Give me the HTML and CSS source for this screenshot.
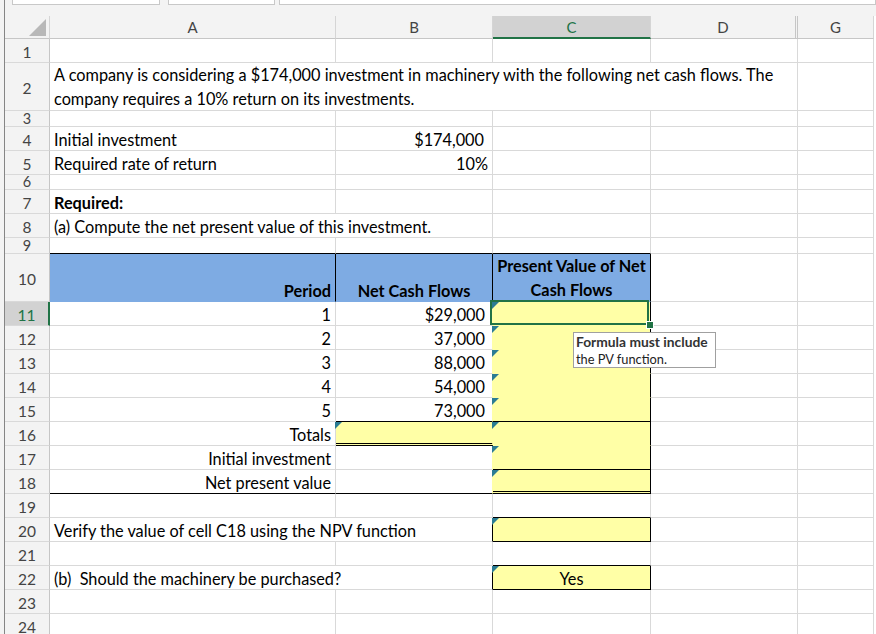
FILE: index.html
```html
<!DOCTYPE html>
<html>
<head>
<meta charset="utf-8">
<link rel="stylesheet" href="styles.css">
</head>
<body>
<div class="app">
  <div class="edge"></div>
  <div class="main">
    <div class="topbar">
      <div class="box box-name"></div>
      <div class="box box-fx"></div>
      <div class="box box-formula"></div>
    </div>
    <div class="sheet">
      <div class="row hdr">
        <div class="corner"><span class="corner-tri"></span></div>
        <div class="ch">A</div><div class="ch">B</div><div class="ch ch-sel">C</div><div class="ch ch-d">D</div><div class="ch">G</div>
      </div>

      <div class="row"><div class="rh">1</div><div></div><div></div><div></div><div></div><div></div></div>

      <div class="row h48"><div class="rh">2</div>
        <div class="c span4 wrap">A company is considering a $174,000 investment in machinery with the following net cash flows. The<br>company requires a 10% return on its investments.</div>
        <div></div></div>

      <div class="row h16"><div class="rh rh-s">3</div><div></div><div></div><div></div><div></div><div></div></div>

      <div class="row"><div class="rh">4</div><div class="c">Initial investment</div><div class="c r pr8">$174,000</div><div></div><div></div><div></div></div>

      <div class="row"><div class="rh">5</div><div class="c">Required rate of return</div><div class="c r">10%</div><div></div><div></div><div></div></div>

      <div class="row h15"><div class="rh rh-s">6</div><div></div><div></div><div></div><div></div><div></div></div>

      <div class="row"><div class="rh">7</div><div class="c b">Required:</div><div></div><div></div><div></div><div></div></div>

      <div class="row"><div class="rh">8</div><div class="c span2">(a) Compute the net present value of this investment.</div><div></div><div></div><div></div></div>

      <div class="row h16"><div class="rh rh-s">9</div><div class="bb"></div><div class="bb"></div><div class="bb"></div><div></div><div></div></div>

      <div class="row h48"><div class="rh">10</div>
        <div class="c r b blue br">Period</div>
        <div class="c ctr b blue br">Net Cash Flows</div>
        <div class="c ctr b blue br wrap">Present Value of Net<br>Cash Flows</div>
        <div></div><div></div></div>

      <div class="row"><div class="rh rh-sel">11</div><div class="c r">1</div><div class="c r pr7 yr">$29,000</div><div class="y yb br tri"></div><div></div><div></div></div>
      <div class="row"><div class="rh">12</div><div class="c r">2</div><div class="c r pr7 yr">37,000</div><div class="y yb br tri"></div><div></div><div></div></div>
      <div class="row"><div class="rh">13</div><div class="c r">3</div><div class="c r pr7 yr">88,000</div><div class="y yb br tri"></div><div></div><div></div></div>
      <div class="row"><div class="rh">14</div><div class="c r">4</div><div class="c r pr7 yr">54,000</div><div class="y yb br tri"></div><div></div><div></div></div>
      <div class="row"><div class="rh">15</div><div class="c r">5</div><div class="c r pr7 yr bb">73,000</div><div class="y bb br tri"></div><div></div><div></div></div>
      <div class="row"><div class="rh">16</div><div class="c r">Totals</div><div class="y yr bbd tri"></div><div class="y yb br tri"></div><div></div><div></div></div>
      <div class="row"><div class="rh">17</div><div class="c r">Initial investment</div><div class="yr"></div><div class="y bb br tri"></div><div></div><div></div></div>
      <div class="row"><div class="rh">18</div><div class="c r bb">Net present value</div><div class="yr bb"></div><div class="y bbd br tri"></div><div></div><div></div></div>

      <div class="row"><div class="rh">19</div><div></div><div></div><div class="bb"></div><div></div><div></div></div>
      <div class="row"><div class="rh">20</div><div class="c span2 br">Verify the value of cell C18 using the NPV function</div><div class="y bb br tri"></div><div></div><div></div></div>
      <div class="row"><div class="rh">21</div><div></div><div></div><div class="bb"></div><div></div><div></div></div>
      <div class="row"><div class="rh">22</div><div class="c span2 br">(b)&nbsp;&nbsp;Should the machinery be purchased?</div><div class="c ctr y bb br tri">Yes</div><div></div><div></div></div>
      <div class="row"><div class="rh">23</div><div></div><div></div><div></div><div></div><div></div></div>
      <div class="row"><div class="rh">24</div><div></div><div></div><div></div><div></div><div></div></div>

      <div class="selection"></div>
      <div class="handle"></div>
      <div class="comment"><b>Formula must include</b><br>the PV function.</div>
    </div>
  </div>
</div>
</body>
</html>
```

FILE: styles.css
```css
* { box-sizing: border-box; }
html, body { margin: 0; padding: 0; background: #fff; }
body {
  font-family: Lato, "Liberation Sans", sans-serif;
  color: #000;
  width: 876px;
  height: 634px;
  overflow: hidden;
}
.app { display: flex; height: 634px; }
.edge { width: 5px; flex: none; background: #f3f3f3; border-right: 1px solid #858585; }
.main { flex: 1; background: #fff; }

.topbar { height: 16px; background: #f3f3f3; display: flex; align-items: flex-start; }
.box { height: 5px; background: #fff; border: 1px solid #c8c8c8; border-top: none; }
.box-name { margin-left: 7px; width: 148px; }
.box-fx { margin-left: 8px; width: 107px; }
.box-formula { margin-left: 4px; flex: 1; }

.sheet { position: relative; }
.row {
  display: grid;
  grid-template-columns: 45px 286px 157px 158px 147px 76px;
  height: 24px;
}
.row > * {
  position: relative;
  border-right: 1px solid #d9d9d9;
  border-bottom: 1px solid #d9d9d9;
  min-width: 0;
}
.h48 { height: 48px; }
.h16 { height: 16px; }
.h15 { height: 15px; }
.hdr { height: 23px; }

.corner, .ch {
  background: #f3f3f3;
  border-bottom-color: #c6c6c6;
  border-right-color: #d5d5d5;
}
.corner-tri {
  position: absolute;
  right: 3px;
  bottom: 2px;
  width: 0; height: 0;
  border-left: 17px solid transparent;
  border-bottom: 17px solid #b8b8b8;
}
.ch {
  display: flex; align-items: center; justify-content: center;
  font-size: 15px; color: #444;
}
.ch-sel {
  background: #d2d2d2;
  color: #217346;
  border-bottom: 2px solid #217346;
}
.ch-d { border-right: 3px double #c6c6c6; }

.rh {
  background: #f3f3f3;
  border-right-color: #c6c6c6;
  display: flex; align-items: center; justify-content: center;
  padding-top: 2px;
  font-size: 15.5px; color: #444;
}
.rh-s { padding-top: 0; font-size: 14.5px; line-height: 14px; }
.rh-sel {
  background: #d2d2d2;
  color: #217346;
  border-right: 2px solid #217346;
}

.c {
  display: flex;
  align-items: flex-end;
  padding: 0 4px 0 4px;
  font-size: 16.3px;
  line-height: 20px;
  white-space: nowrap;
}
.wrap { flex-direction: column; justify-content: flex-end; align-items: flex-start; line-height: 23.5px; padding-bottom: 0; }
.wrap.ctr { align-items: center; }
.r { justify-content: flex-end; text-align: right; }
.ctr { justify-content: center; text-align: center; }
.b { font-weight: bold; }
.pr7 { padding-right: 7px; }
.pr8 { padding-right: 8px; }
.span2 { grid-column: span 2; }
.span4 { grid-column: span 4; }

.blue { background: #7eabe3; border-bottom-color: #7eabe3; }
.y { background: #ffffa6; }
.yb { border-bottom-color: #ffffa6; }
.yr { border-right-color: #ffffa6; }
.bb { border-bottom-color: #000; }
.br { border-right-color: #000; }
.bbd { border-bottom: 3px double #000; }

.tri::before {
  content: "";
  position: absolute;
  left: -1px;
  top: 0;
  width: 0; height: 0;
  border-top: 7px solid #2b7c93;
  border-right: 7px solid transparent;
}

.selection {
  position: absolute;
  left: 485px;
  top: 284px;
  width: 159px;
  height: 25px;
  border: 2px solid #217346;
}
.handle {
  position: absolute;
  left: 642px;
  top: 306px;
  width: 6px;
  height: 6px;
  background: #217346;
  box-shadow: 0 0 0 1px #fff;
}
.comment {
  position: absolute;
  left: 568px;
  top: 316px;
  width: 143px;
  height: 36px;
  background: #fff;
  border: 1px solid #a0a0a0;
  padding: 1px 2px;
  font-size: 12.8px;
  line-height: 16.5px;
  color: #222;
  white-space: nowrap;
}
.comment b { color: #333; font-size: 13.8px; }
```
